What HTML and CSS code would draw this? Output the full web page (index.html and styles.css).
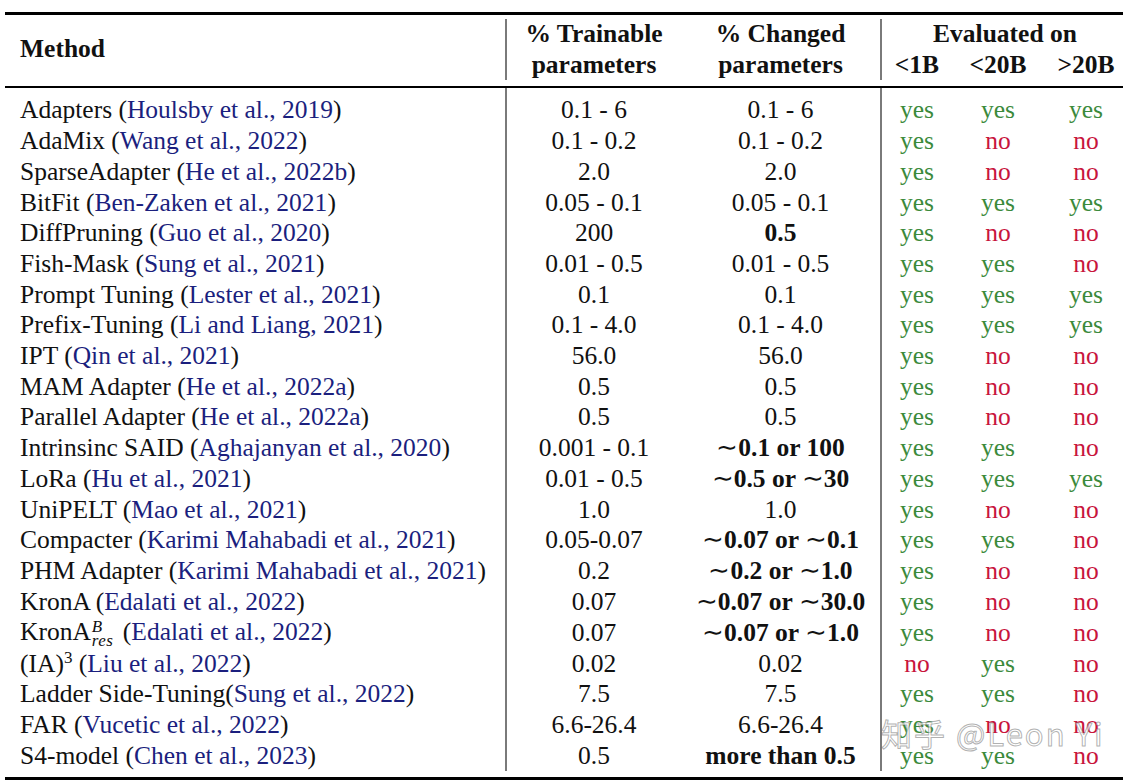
FILE: index.html
```html
<!DOCTYPE html>
<html>
<head>
<meta charset="utf-8">
<link rel="stylesheet" href="styles.css">
</head>
<body>
<div class="page">
<table class="tbl">
  <colgroup>
    <col class="c-method"><col class="c-train"><col class="c-changed"><col class="c-e1"><col class="c-e2"><col class="c-e3">
  </colgroup>
  <thead>
    <tr class="rule-thick"><td colspan="6"></td></tr>
    <tr class="head">
      <th class="method-h" rowspan="2">Method</th>
      <th class="vl">% Trainable</th>
      <th>% Changed</th>
      <th class="vl" colspan="3">Evaluated on</th>
    </tr>
    <tr class="head">
      <th class="vl">parameters</th>
      <th>parameters</th>
      <th class="vl">&lt;1B</th>
      <th>&lt;20B</th>
      <th>&gt;20B</th>
    </tr>
    <tr class="rule-mid"><td colspan="6"></td></tr>
  </thead>
  <tbody>
    <tr><td class="m">Adapters (<span class="cite">Houlsby et al., 2019</span>)</td><td class="vl">0.1 - 6</td><td>0.1 - 6</td><td class="vl y">yes</td><td class="y">yes</td><td class="y">yes</td></tr>
    <tr><td class="m">AdaMix (<span class="cite">Wang et al., 2022</span>)</td><td class="vl">0.1 - 0.2</td><td>0.1 - 0.2</td><td class="vl y">yes</td><td class="n">no</td><td class="n">no</td></tr>
    <tr><td class="m">SparseAdapter (<span class="cite">He et al., 2022b</span>)</td><td class="vl">2.0</td><td>2.0</td><td class="vl y">yes</td><td class="n">no</td><td class="n">no</td></tr>
    <tr><td class="m">BitFit (<span class="cite">Ben-Zaken et al., 2021</span>)</td><td class="vl">0.05 - 0.1</td><td>0.05 - 0.1</td><td class="vl y">yes</td><td class="y">yes</td><td class="y">yes</td></tr>
    <tr><td class="m">DiffPruning (<span class="cite">Guo et al., 2020</span>)</td><td class="vl">200</td><td class="b">0.5</td><td class="vl y">yes</td><td class="n">no</td><td class="n">no</td></tr>
    <tr><td class="m">Fish-Mask (<span class="cite">Sung et al., 2021</span>)</td><td class="vl">0.01 - 0.5</td><td>0.01 - 0.5</td><td class="vl y">yes</td><td class="y">yes</td><td class="n">no</td></tr>
    <tr><td class="m">Prompt Tuning (<span class="cite">Lester et al., 2021</span>)</td><td class="vl">0.1</td><td>0.1</td><td class="vl y">yes</td><td class="y">yes</td><td class="y">yes</td></tr>
    <tr><td class="m">Prefix-Tuning (<span class="cite">Li and Liang, 2021</span>)</td><td class="vl">0.1 - 4.0</td><td>0.1 - 4.0</td><td class="vl y">yes</td><td class="y">yes</td><td class="y">yes</td></tr>
    <tr><td class="m">IPT (<span class="cite">Qin et al., 2021</span>)</td><td class="vl">56.0</td><td>56.0</td><td class="vl y">yes</td><td class="n">no</td><td class="n">no</td></tr>
    <tr><td class="m">MAM Adapter (<span class="cite">He et al., 2022a</span>)</td><td class="vl">0.5</td><td>0.5</td><td class="vl y">yes</td><td class="n">no</td><td class="n">no</td></tr>
    <tr><td class="m">Parallel Adapter (<span class="cite">He et al., 2022a</span>)</td><td class="vl">0.5</td><td>0.5</td><td class="vl y">yes</td><td class="n">no</td><td class="n">no</td></tr>
    <tr><td class="m">Intrinsinc SAID (<span class="cite">Aghajanyan et al., 2020</span>)</td><td class="vl">0.001 - 0.1</td><td class="b"><span class="t">∼</span>0.1 or 100</td><td class="vl y">yes</td><td class="y">yes</td><td class="n">no</td></tr>
    <tr><td class="m">LoRa (<span class="cite">Hu et al., 2021</span>)</td><td class="vl">0.01 - 0.5</td><td class="b"><span class="t">∼</span>0.5 or <span class="t">∼</span>30</td><td class="vl y">yes</td><td class="y">yes</td><td class="y">yes</td></tr>
    <tr><td class="m">UniPELT (<span class="cite">Mao et al., 2021</span>)</td><td class="vl">1.0</td><td>1.0</td><td class="vl y">yes</td><td class="n">no</td><td class="n">no</td></tr>
    <tr><td class="m">Compacter (<span class="cite">Karimi Mahabadi et al., 2021</span>)</td><td class="vl">0.05-0.07</td><td class="b"><span class="t">∼</span>0.07 or <span class="t">∼</span>0.1</td><td class="vl y">yes</td><td class="y">yes</td><td class="n">no</td></tr>
    <tr><td class="m">PHM Adapter (<span class="cite">Karimi Mahabadi et al., 2021</span>)</td><td class="vl">0.2</td><td class="b"><span class="t">∼</span>0.2 or <span class="t">∼</span>1.0</td><td class="vl y">yes</td><td class="n">no</td><td class="n">no</td></tr>
    <tr><td class="m">KronA (<span class="cite">Edalati et al., 2022</span>)</td><td class="vl">0.07</td><td class="b"><span class="t">∼</span>0.07 or <span class="t">∼</span>30.0</td><td class="vl y">yes</td><td class="n">no</td><td class="n">no</td></tr>
    <tr><td class="m">KronA<span class="supsub"><span class="sp">B</span><span class="sb">res</span></span> (<span class="cite">Edalati et al., 2022</span>)</td><td class="vl">0.07</td><td class="b"><span class="t">∼</span>0.07 or <span class="t">∼</span>1.0</td><td class="vl y">yes</td><td class="n">no</td><td class="n">no</td></tr>
    <tr><td class="m">(IA)<sup class="sup3">3</sup> (<span class="cite">Liu et al., 2022</span>)</td><td class="vl">0.02</td><td>0.02</td><td class="vl n">no</td><td class="y">yes</td><td class="n">no</td></tr>
    <tr><td class="m">Ladder Side-Tuning(<span class="cite">Sung et al., 2022</span>)</td><td class="vl">7.5</td><td>7.5</td><td class="vl y">yes</td><td class="y">yes</td><td class="n">no</td></tr>
    <tr><td class="m">FAR (<span class="cite">Vucetic et al., 2022</span>)</td><td class="vl">6.6-26.4</td><td>6.6-26.4</td><td class="vl y">yes</td><td class="n">no</td><td class="n">no</td></tr>
    <tr><td class="m">S4-model (<span class="cite">Chen et al., 2023</span>)</td><td class="vl">0.5</td><td class="b">more than 0.5</td><td class="vl y">yes</td><td class="y">yes</td><td class="n">no</td></tr>
    <tr class="rule-bottom"><td colspan="6"></td></tr>
  </tbody>
</table>
<div class="watermark">知乎 @Leon Yi</div>
</div>
</body>
</html>
```
FILE: styles.css
```css
html, body {
  margin: 0;
  padding: 0;
  background: #ffffff;
}
body {
  width: 1123px;
  height: 781px;
  overflow: hidden;
}
.page {
  position: relative;
  padding-top: 12px;
  padding-left: 5px;
  width: 1123px;
  height: 781px;
  box-sizing: border-box;
}
.tbl {
  border-collapse: separate;
  border-spacing: 0;
  table-layout: fixed;
  width: 1123px;
  font-family: "Liberation Serif", "Times New Roman", serif;
  font-size: 25.5px;
  color: #111111;
}
.c-method { width: 500px; }
.c-train { width: 176px; }
.c-changed { width: 199px; }
.c-e1 { width: 72px; }
.c-e2 { width: 92px; }
.c-e3 { width: 84px; }

.tbl td, .tbl th {
  padding: 0;
  height: 30.7px;
  line-height: 30.7px;
  text-align: center;
  white-space: nowrap;
  vertical-align: middle;
}
.tbl th { font-weight: bold; }
.tbl .method-h {
  text-align: left;
  padding-left: 15px;
}
.tbl td.m {
  text-align: left;
  padding-left: 15px;
}
.vl {
  border-left: 2px solid #7a7a7a;
}
.tbl tr.rule-thick td {
  height: 4px;
  line-height: 0;
  border-top: 3px solid #000;
}
.tbl tr.rule-mid td {
  height: 6px;
  line-height: 0;
  border-bottom: 2px solid #000;
}
.tbl tr.rule-bottom td {
  height: 6px;
  line-height: 0;
  border-bottom: 3px solid #000;
}
tbody tr:first-child td { padding-top: 7px; }

.cite { color: #1b1f7e; }
.y { color: #3b8a3b; }
.n { color: #c8153c; }
.b { font-weight: bold; }
.t { font-weight: normal; }

.supsub {
  display: inline-flex;
  flex-direction: column;
  vertical-align: middle;
  line-height: 1;
  font-style: italic;
  font-size: 17px;
  margin-left: 1px;
  margin-right: 3px;
  position: relative;
  top: -2px;
}
.supsub .sp { line-height: 15px; }
.supsub .sb { line-height: 13px; letter-spacing: 0.5px; }
.sup3 {
  font-size: 17px;
  line-height: 0;
  vertical-align: 9px;
}

.watermark {
  position: absolute;
  left: 881px;
  top: 713px;
  font-family: "Noto Sans CJK SC", "Noto Sans", sans-serif;
  font-size: 31px;
  line-height: 40px;
  color: rgba(255, 255, 255, 0.7);
  -webkit-text-stroke: 1px rgba(100, 100, 100, 0.5);
  white-space: nowrap;
  letter-spacing: 2px;
}
```
